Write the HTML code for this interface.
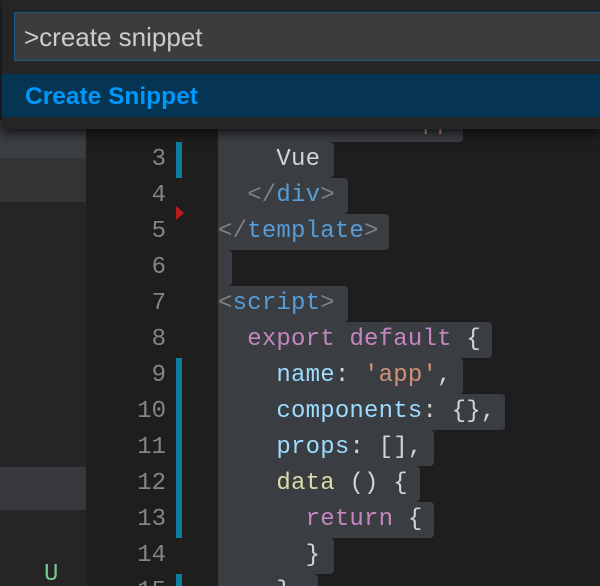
<!DOCTYPE html>
<html><head><style>
html,body{margin:0;padding:0;width:600px;height:586px;overflow:hidden;background:#1e1e1e;position:relative}
.a{position:absolute}
.side{left:0;top:0;width:86px;height:586px;background:#252526}
.code{font-family:"Liberation Mono","DejaVu Sans Mono",monospace;font-size:24px;letter-spacing:0.2px;line-height:36px;white-space:pre}
.ln{left:90px;width:76px;text-align:right;color:#858585;font-family:"Liberation Mono",monospace;font-size:24px;line-height:36px}
.sel{background:#3a3d41;border-radius:0 4px 4px 0;left:218px;height:36px}
.bar{left:176px;width:6px;background:#0c7d9d}
.g{color:#808080}.t{color:#569cd6}.w{color:#d4d4d4}.k{color:#c586c0}.p{color:#9cdcfe}.s{color:#ce9178}.f{color:#dcdcaa}
</style></head><body>
<div class="a side"></div>
<div class="a" style="left:0;top:120px;width:86px;height:38px;background:#3a3d41"></div>
<div class="a" style="left:0;top:158px;width:86px;height:44px;background:#333333"></div>
<div class="a" style="left:0;top:467px;width:86px;height:43px;background:#37373d"></div>
<div class="a" style="left:44px;top:560px;color:#73c991;font-family:'Liberation Mono',monospace;font-size:24px;line-height:30px">U</div>

<div class="a sel" style="top:106px;width:245px"></div>
<div class="a sel" style="top:142px;width:116px"></div>
<div class="a sel" style="top:178px;width:130px"></div>
<div class="a sel" style="top:214px;width:171px"></div>
<div class="a sel" style="top:250px;width:14px"></div>
<div class="a sel" style="top:286px;width:130px"></div>
<div class="a sel" style="top:322px;width:274px"></div>
<div class="a sel" style="top:358px;width:245px"></div>
<div class="a sel" style="top:394px;width:287px"></div>
<div class="a sel" style="top:430px;width:216px"></div>
<div class="a sel" style="top:466px;width:202px"></div>
<div class="a sel" style="top:502px;width:216px"></div>
<div class="a sel" style="top:538px;width:116px"></div>
<div class="a sel" style="top:574px;width:100px"></div>

<div class="a bar" style="top:142px;height:36px"></div>
<div class="a bar" style="top:358px;height:180px"></div>
<div class="a bar" style="top:574px;height:12px"></div>
<div class="a" style="left:176px;top:206px;width:0;height:0;border-top:7px solid transparent;border-bottom:7px solid transparent;border-left:8px solid #b71c1c"></div>

<div class="a ln" style="top:142px">3</div>
<div class="a ln" style="top:178px">4</div>
<div class="a ln" style="top:214px">5</div>
<div class="a ln" style="top:250px">6</div>
<div class="a ln" style="top:286px">7</div>
<div class="a ln" style="top:322px">8</div>
<div class="a ln" style="top:358px">9</div>
<div class="a ln" style="top:394px">10</div>
<div class="a ln" style="top:430px">11</div>
<div class="a ln" style="top:466px">12</div>
<div class="a ln" style="top:502px">13</div>
<div class="a ln" style="top:538px">14</div>
<div class="a ln" style="top:574px">15</div>

<div class="a code" style="left:218px;top:106px"><span class="g">    &lt;</span><span class="t">div</span> <span class="p">id</span>=<span class="s">"app"</span><span class="g">&gt;</span></div>
<div class="a code" style="left:218px;top:142px"><span class="w">    Vue</span></div>
<div class="a code" style="left:218px;top:178px"><span class="g">  &lt;/</span><span class="t">div</span><span class="g">&gt;</span></div>
<div class="a code" style="left:218px;top:214px"><span class="g">&lt;/</span><span class="t">template</span><span class="g">&gt;</span></div>
<div class="a code" style="left:218px;top:286px"><span class="g">&lt;</span><span class="t">script</span><span class="g">&gt;</span></div>
<div class="a code" style="left:218px;top:322px">  <span class="k">export</span> <span class="k">default</span> <span class="w">{</span></div>
<div class="a code" style="left:218px;top:358px">    <span class="p">name</span><span class="w">: </span><span class="s">'app'</span><span class="w">,</span></div>
<div class="a code" style="left:218px;top:394px">    <span class="p">components</span><span class="w">: {},</span></div>
<div class="a code" style="left:218px;top:430px">    <span class="p">props</span><span class="w">: [],</span></div>
<div class="a code" style="left:218px;top:466px">    <span class="f">data</span><span class="w"> () {</span></div>
<div class="a code" style="left:218px;top:502px">      <span class="k">return</span><span class="w"> {</span></div>
<div class="a code" style="left:218px;top:538px"><span class="w">      }</span></div>
<div class="a code" style="left:218px;top:574px"><span class="w">    }</span></div>

<div class="a" style="left:2px;top:0;width:598px;height:129px;background:#252526;box-shadow:0 4px 10px rgba(0,0,0,0.7)"></div>
<div class="a" style="left:14px;top:12px;width:590px;height:49px;box-sizing:border-box;background:#3c3c3c;border:1px solid #1f5a86"></div>
<div class="a" style="left:24px;top:12px;height:49px;line-height:50px;color:#cccccc;font-family:'Liberation Sans',sans-serif;font-size:26px">&gt;create snippet</div>
<div class="a" style="left:2px;top:74px;width:598px;height:43px;background:#063554"></div>
<div class="a" style="left:25px;top:74px;height:43px;line-height:45px;color:#0097fb;font-family:'Liberation Sans',sans-serif;font-size:24.5px;font-weight:bold">Create Snippet</div>
</body></html>
